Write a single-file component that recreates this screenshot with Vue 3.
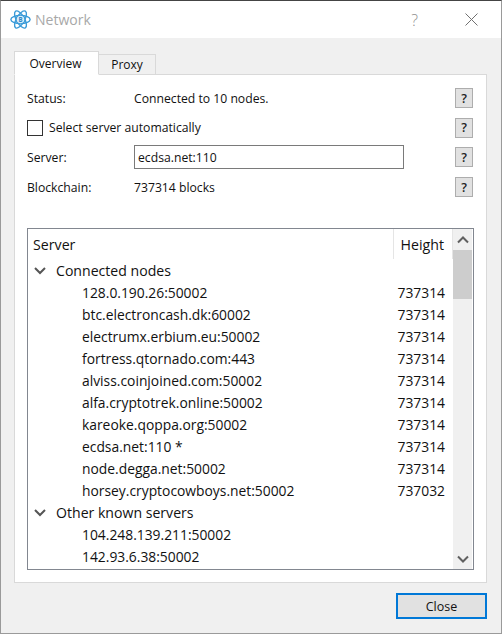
<template>
  <div class="window">
    <div class="titlebar">
      <svg class="logo" viewBox="0 0 24 24" width="21" height="21">
        <g fill="none" stroke="#3a9bd8" stroke-width="1.6">
          <ellipse cx="12" cy="12" rx="11" ry="4.6" />
          <ellipse cx="12" cy="12" rx="11" ry="4.6" transform="rotate(60 12 12)" />
          <ellipse cx="12" cy="12" rx="11" ry="4.6" transform="rotate(120 12 12)" />
        </g>
        <circle cx="12" cy="12" r="5" fill="#d8ecf9" stroke="#3a9bd8" stroke-width="1.4" />
        <text x="12" y="14.8" class="logo-b">B</text>
      </svg>
      <span class="title">Network</span>
      <span class="title-help">?</span>
      <svg class="title-close" viewBox="0 0 13 13" width="13" height="13">
        <path d="M0.5 0.5 L12.5 12.5 M12.5 0.5 L0.5 12.5" stroke="#707070" stroke-width="1" fill="none" />
      </svg>
    </div>

    <div class="body">
      <div class="tabs">
        <div class="tab active">Overview</div>
        <div class="tab">Proxy</div>
      </div>

      <div class="pane">
        <div class="form">
          <span>Status:</span>
          <span>Connected to 10 nodes.</span>
          <button class="help">?</button>

          <label class="check-row">
            <span class="checkbox"></span>
            <span>Select server automatically</span>
          </label>
          <button class="help">?</button>

          <span>Server:</span>
          <input class="server-input" value="ecdsa.net:110" />
          <button class="help">?</button>

          <span>Blockchain:</span>
          <span>737314 blocks</span>
          <button class="help">?</button>
        </div>

        <div class="list">
          <div class="table">
            <div class="head">
              <div class="head-server">Server</div>
              <div class="head-height">Height</div>
            </div>
            <div class="rows">
              <template v-for="group in groups" :key="group.name">
                <div class="row group">
                  <svg class="chevron" viewBox="0 0 12 8" width="12" height="8">
                    <path d="M1 1 L6 6 L11 1" fill="none" stroke="#555" stroke-width="2" />
                  </svg>
                  <span>{{ group.name }}</span>
                </div>
                <div class="row node" v-for="node in group.nodes" :key="node[0]">
                  <span>{{ node[0] }}</span>
                  <span class="height">{{ node[1] }}</span>
                </div>
              </template>
            </div>
          </div>
          <div class="scrollbar">
            <svg class="arrow" viewBox="0 0 12 8" width="12" height="8">
              <path d="M1 6.5 L6 1.5 L11 6.5" fill="none" stroke="#606060" stroke-width="2" />
            </svg>
            <div class="track"><div class="thumb"></div></div>
            <svg class="arrow" viewBox="0 0 12 8" width="12" height="8">
              <path d="M1 1.5 L6 6.5 L11 1.5" fill="none" stroke="#606060" stroke-width="2" />
            </svg>
          </div>
        </div>
      </div>

      <div class="footer">
        <button class="close">Close</button>
      </div>
    </div>
  </div>
</template>

<script setup>
const groups = [
  {
    name: "Connected nodes",
    nodes: [
      ["128.0.190.26:50002", "737314"],
      ["btc.electroncash.dk:60002", "737314"],
      ["electrumx.erbium.eu:50002", "737314"],
      ["fortress.qtornado.com:443", "737314"],
      ["alviss.coinjoined.com:50002", "737314"],
      ["alfa.cryptotrek.online:50002", "737314"],
      ["kareoke.qoppa.org:50002", "737314"],
      ["ecdsa.net:110 *", "737314"],
      ["node.degga.net:50002", "737314"],
      ["horsey.cryptocowboys.net:50002", "737032"],
    ],
  },
  {
    name: "Other known servers",
    nodes: [
      ["104.248.139.211:50002", ""],
      ["142.93.6.38:50002", ""],
    ],
  },
];
</script>

<style>
html,
body {
  margin: 0;
  background: #f0f0f0;
}
</style>

<style scoped>
.window {
  width: 502px;
  height: 634px;
  box-sizing: border-box;
  display: flex;
  flex-direction: column;
  background: #f0f0f0;
  border: 1px solid #9a9a9a;
  border-top-color: #444;
  font-family: "Open Sans", "Noto Sans", sans-serif;
  font-size: 12.2px;
  color: #111;
}

.titlebar {
  height: 37px;
  flex: none;
  display: flex;
  align-items: center;
  background: #fff;
  padding-left: 9px;
}
.logo-b {
  font-size: 7px;
  font-weight: 700;
  fill: #2f86c4;
  text-anchor: middle;
  font-family: "Open Sans", sans-serif;
}
.title {
  margin-left: 4px;
  font-size: 14px;
  color: #a8a8a8;
}
.title-help {
  margin-left: auto;
  font-size: 16px;
  font-weight: 300;
  color: #909090;
}
.title-close {
  margin-left: 47px;
  margin-right: 23px;
}

.body {
  flex: 1;
  display: flex;
  flex-direction: column;
  padding: 13px 14px 0 13px;
  min-height: 0;
}

.tabs {
  display: flex;
  align-items: flex-end;
  height: 24px;
  flex: none;
  margin-bottom: -1px;
  position: relative;
}
.tab {
  height: 21px;
  box-sizing: border-box;
  width: 57px;
  border: 1px solid #d9d9d9;
  border-left: none;
  border-bottom: 1px solid #d9d9d9;
  background: #f0f0f0;
  text-align: center;
  line-height: 19px;
  font-size: 12px;
}
.tab.active {
  height: 24px;
  width: 85px;
  padding-right: 2px;
  border-left: 1px solid #d9d9d9;
  border-bottom: 1px solid #fff;
  background: #fff;
  line-height: 23px;
}

.pane {
  height: 509px;
  flex: none;
  box-sizing: border-box;
  display: flex;
  flex-direction: column;
  background: #fff;
  border: 1px solid #d9d9d9;
  padding: 8px 12px 12px;
}

.form {
  display: grid;
  grid-template-columns: 107px 1fr 18px;
  grid-template-rows: 30px 29px 30px 30px;
  align-items: center;
  padding-right: 1px;
}
.check-row {
  grid-column: 1 / 3;
  display: flex;
  align-items: center;
  gap: 6px;
}
.checkbox {
  width: 14px;
  height: 14px;
  border: 1px solid #333;
  background: #fff;
}
.server-input {
  width: 270px;
  height: 24px;
  box-sizing: border-box;
  border: 1px solid #7a7a7a;
  padding: 0 3px;
  font: inherit;
  color: #111;
  outline: none;
}
.help {
  width: 18px;
  height: 20px;
  box-sizing: border-box;
  padding: 0;
  border: 1px solid #adadad;
  background: #e1e1e1;
  font: inherit;
  font-size: 12.5px;
  font-weight: 600;
  color: #222;
}

.list {
  flex: 1;
  min-height: 0;
  margin-top: 26px;
  display: flex;
  border: 1px solid #828790;
  overflow: hidden;
}
.table {
  flex: 1;
  min-width: 0;
  overflow: hidden;
  font-size: 13.85px;
}
.head {
  display: flex;
  height: 30px;
  font-size: 14.2px;
}
.head-server {
  width: 366px;
  box-sizing: border-box;
  padding: 6px 0 0 5px;
  border-right: 1px solid #e5e5e5;
}
.head-height {
  flex: 1;
  text-align: right;
  padding: 6px 8px 0 0;
  border-right: 1px solid #e5e5e5;
}
.rows {
  margin-top: 1px;
}
.row {
  height: 22px;
  line-height: 22px;
  display: flex;
  white-space: nowrap;
}
.group {
  align-items: center;
  padding-left: 6px;
  gap: 10px;
  font-size: 14.1px;
}
.node {
  padding-left: 54px;
  justify-content: space-between;
}
.height {
  padding-right: 8px;
}

.scrollbar {
  width: 19px;
  flex: none;
  margin-right: 1px;
  display: flex;
  flex-direction: column;
  align-items: center;
  background: #f0f0f0;
}
.arrow {
  flex: none;
  margin: 6.5px 0;
}
.track {
  flex: 1;
  width: 100%;
}
.thumb {
  height: 49px;
  background: #cdcdcd;
}

.footer {
  flex: 1;
  display: flex;
  justify-content: flex-end;
  align-items: flex-start;
  padding: 10px 0 0 0;
}
.close {
  width: 91px;
  height: 26px;
  box-sizing: border-box;
  padding: 0;
  border: 2px solid #0078d7;
  background: #e1e1e1;
  font: inherit;
  font-size: 12.5px;
  color: #111;
}
</style>
